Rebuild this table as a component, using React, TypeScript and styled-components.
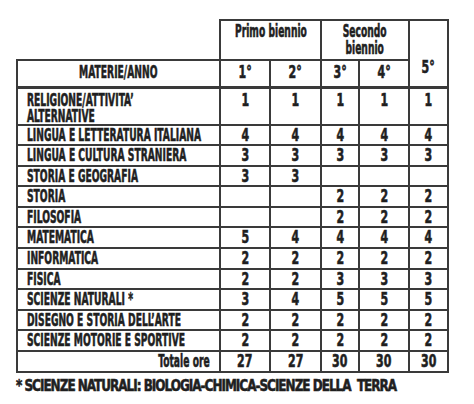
import React from "react";
import styled, { createGlobalStyle } from "styled-components";

const Global = createGlobalStyle`
  html, body { margin: 0; padding: 0; background: #ffffff; }
  body {
    width: 474px;
    height: 404px;
    overflow: hidden;
    font-family: "DejaVu Sans Condensed", "DejaVu Sans", sans-serif;
    font-stretch: condensed;
    font-weight: 700;
    color: #1f1f1f;
  }
`;

const Page = styled.div`
  padding: 19px 0 0 16px;
  overflow: hidden;
`;

const Table = styled.table`
  border-collapse: collapse;
  table-layout: fixed;
  width: 431px;
`;

const Row = styled.tr<{ $h: number }>`
  height: ${(p) => p.$h}px;
`;

type Align = "left" | "center" | "right";

const Cell = styled.td<{
  $align?: Align;
  $pt?: number;
  $blank?: boolean;
  $lh?: number;
  $thickBottom?: boolean;
}>`
  border: ${(p) => (p.$blank ? "none" : "2px solid #3a3a3a")};
  ${(p) => (p.$thickBottom ? "border-bottom-width: 3px;" : "")}
  padding: ${(p) => p.$pt ?? 1}px ${(p) => (p.$align === "center" || !p.$align ? 0 : 9)}px 0;
  text-align: ${(p) => p.$align ?? "center"};
  vertical-align: top;
  white-space: nowrap;
  overflow: hidden;
  font-size: 17px;
  line-height: ${(p) => p.$lh ?? 16}px;
`;

const CenterBox = styled.div`
  display: flex;
  justify-content: center;
`;

const Txt = styled.span<{ $sx: number; $origin: Align; $ls?: number }>`
  display: inline-block;
  flex-shrink: 0;
  letter-spacing: ${(p) => p.$ls ?? 0}px;
  -webkit-text-stroke: 0.6px currentColor;
  transform: scaleX(${(p) => p.$sx});
  transform-origin: ${(p) => p.$origin} center;
`;

const Note = styled.div`
  margin-top: 3px;
  font-size: 16px;
  line-height: 19px;
  white-space: pre;
`;

const LETTER = 0.6;
const DIGIT = 0.72;

const Left = ({ children }: { children: React.ReactNode }) => (
  <Txt $sx={LETTER} $origin="left">{children}</Txt>
);
const Mid = ({ children, sx = DIGIT }: { children: React.ReactNode; sx?: number }) => (
  <CenterBox>
    <Txt $sx={sx} $origin="center">{children}</Txt>
  </CenterBox>
);

const rows: [React.ReactNode, ...(number | string)[]][] = [
  ["LINGUA E LETTERATURA ITALIANA", 4, 4, 4, 4, 4],
  ["LINGUA E CULTURA STRANIERA", 3, 3, 3, 3, 3],
  ["STORIA E GEOGRAFIA", 3, 3, "", "", ""],
  ["STORIA", "", "", 2, 2, 2],
  ["FILOSOFIA", "", "", 2, 2, 2],
  ["MATEMATICA", 5, 4, 4, 4, 4],
  ["INFORMATICA", 2, 2, 2, 2, 2],
  ["FISICA", 2, 2, 3, 3, 3],
  ["SCIENZE NATURALI *", 3, 4, 5, 5, 5],
  ["DISEGNO E STORIA DELL\u2019ARTE", 2, 2, 2, 2, 2],
  ["SCIENZE MOTORIE E SPORTIVE", 2, 2, 2, 2, 2],
];

const widths = [203, 50, 51, 38, 50, 39];

export default function App() {
  return (
    <>
      <Global />
      <Page>
        <Table>
          <colgroup>
            {widths.map((w, i) => (
              <col key={i} style={{ width: w }} />
            ))}
          </colgroup>
          <thead>
            <Row $h={40}>
              <Cell $blank />
              <Cell colSpan={2} $pt={2} $lh={17}>
                <Mid sx={LETTER}>Primo biennio</Mid>
              </Cell>
              <Cell colSpan={2} $pt={2} $lh={17}>
                <Mid sx={LETTER}>
                  Secondo
                  <br />
                  biennio
                </Mid>
              </Cell>
              <Cell rowSpan={2} $pt={38} $thickBottom>
                <Mid>5°</Mid>
              </Cell>
            </Row>
            <Row $h={27}>
              <Cell $pt={3} $thickBottom>
                <Mid sx={LETTER}>MATERIE/ANNO</Mid>
              </Cell>
              {["1°", "2°", "3°", "4°"].map((t) => (
                <Cell key={t} $pt={3} $thickBottom>
                  <Mid>{t}</Mid>
                </Cell>
              ))}
            </Row>
          </thead>
          <tbody>
            <Row $h={36}>
              <Cell $align="left" $pt={3}>
                <Left>
                  RELIGIONE/ATTIVITA{"\u2019"}
                  <br />
                  ALTERNATIVE
                </Left>
              </Cell>
              {[1, 1, 1, 1, 1].map((n, i) => (
                <Cell key={i} $pt={3}>
                  <Mid>{n}</Mid>
                </Cell>
              ))}
            </Row>
            {rows.map(([label, ...vals], r) => (
              <Row $h={20.6} key={r}>
                <Cell $align="left">
                  <Left>{label}</Left>
                </Cell>
                {vals.map((v, i) => (
                  <Cell key={i}>
                    <Mid>{v}</Mid>
                  </Cell>
                ))}
              </Row>
            ))}
            <Row $h={20.6}>
              <Cell $align="right">
                <Txt $sx={LETTER} $origin="right">Totale ore</Txt>
              </Cell>
              {[27, 27, 30, 30, 30].map((n, i) => (
                <Cell key={i}>
                  <Mid>{n}</Mid>
                </Cell>
              ))}
            </Row>
          </tbody>
        </Table>
        <Note>
          <Txt $sx={0.835} $ls={-1.2} $origin="left">
            {"* SCIENZE NATURALI: BIOLOGIA-CHIMICA-SCIENZE DELLA  TERRA"}
          </Txt>
        </Note>
      </Page>
    </>
  );
}
